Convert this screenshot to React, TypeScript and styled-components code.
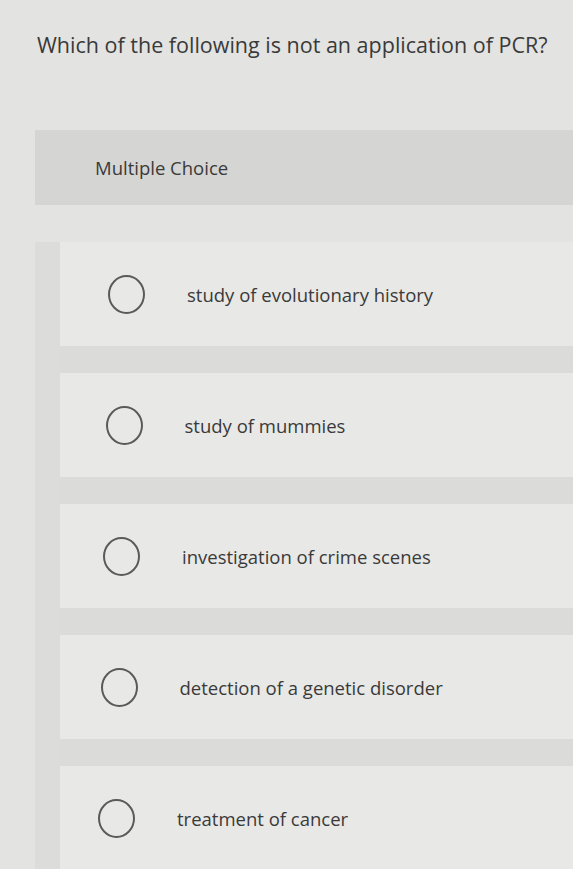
import React, { useState } from 'react';
import styled, { createGlobalStyle } from 'styled-components';

const GlobalStyle = createGlobalStyle`
    html, body {
        margin: 0;
        padding: 0;
        background: #e3e3e1;
    }
    body {
        font-family: "Open Sans", "Liberation Sans", sans-serif;
        color: #3d3d3d;
    }
`

const Page = styled.div`
    width: 573px;
    min-height: 869px;
    overflow: hidden;
    background: #e3e3e1;
`

const Question = styled.h1`
    margin: 0;
    padding: 30px 0 0 37px;
    height: 130px;
    box-sizing: border-box;
    font-size: 21.5px;
    font-weight: 400;
    color: #3a3a3a;
`

const Band = styled.div`
    margin-left: 35px;
    height: 75px;
    display: flex;
    align-items: center;
    padding-left: 60px;
    background: #d5d5d3;
    font-size: 18.5px;
    color: #3a3a3a;
`

const Options = styled.ul`
    list-style: none;
    margin: 37px 0 0 35px;
    padding: 0 0 0 25px;
    display: flex;
    flex-direction: column;
    gap: 27px;
    background: linear-gradient(to right, #dcdcda 0, #dcdcda 25px, transparent 25px);
`

const Option = styled.li`
    height: 104px;
    display: flex;
    align-items: center;
    padding-left: ${p => p.$indent}px;
    background: #e8e8e6;
    box-shadow: 0 27px 0 #dbdbd9;
    cursor: pointer;
`

const Radio = styled.span`
    width: 37px;
    height: 39px;
    border: 2px solid ${p => (p.$checked ? '#2f6fb5' : '#5a5a5a')};
    border-radius: 50%;
    flex-shrink: 0;
    box-sizing: border-box;
`

const Label = styled.span`
    margin-left: 42px;
    font-size: 18.5px;
    color: #3a3a3a;
`

const choices = [
    'study of evolutionary history',
    'study of mummies',
    'investigation of crime scenes',
    'detection of a genetic disorder',
    'treatment of cancer',
];

export default function App() {
    const [selected, setSelected] = useState<number | null>(null);

    return (
        <Page>
            <GlobalStyle />
            <Question>Which of the following is not an application of PCR?</Question>
            <Band>Multiple Choice</Band>
            <Options>
                {choices.map((c, i) => (
                    <Option key={c} $indent={48 - i * 2.5} onClick={() => setSelected(i)}>
                        <Radio $checked={selected === i} />
                        <Label>{c}</Label>
                    </Option>
                ))}
            </Options>
        </Page>
    );
}
